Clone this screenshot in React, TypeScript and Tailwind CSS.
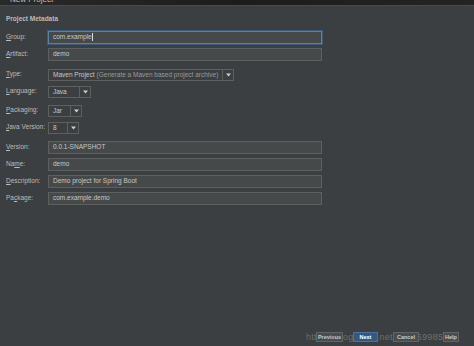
const font = { fontFamily: '"Liberation Sans", Arial, sans-serif' };

function Label({ text, u = 0 }: { text: string; u?: number }) {
  return (
    <span className="w-[42px] shrink-0 text-[6.5px] text-[#bbbbbb] leading-none">
      {text.slice(0, u)}
      <span className="underline">{text[u]}</span>
      {text.slice(u + 1)}
    </span>
  );
}

function TextRow({ label, u, value, focused, mt }: { label: string; u?: number; value: string; focused?: boolean; mt: string }) {
  return (
    <div className={`flex items-center pl-[6px] ${mt}`}>
      <Label text={label} u={u} />
      <div
        className={`h-[13px] w-[274px] flex items-center pl-[4px] text-[6.5px] text-[#c8c8c8] border ${
          focused ? 'border-[#5d7fa3] bg-[#45494a] shadow-[0_0_0_1px_#3c5a7a]' : 'border-[#5e6060] bg-[#45494a]'
        }`}
      >
        {value}
        {focused && <span className="w-px h-[8px] bg-[#dddddd]" />}
      </div>
    </div>
  );
}

function ComboRow({ label, u, value, width, mt }: { label: string; u?: number; value: React.ReactNode; width: string; mt: string }) {
  return (
    <div className={`flex items-center pl-[6px] ${mt}`}>
      <Label text={label} u={u} />
      <div className={`h-[12px] ${width} flex border border-[#5e6060] bg-[#3c3f41]`}>
        <div className="flex-1 flex items-center pl-[4px] text-[6.5px] text-[#c8c8c8] whitespace-nowrap overflow-hidden">{value}</div>
        <div className="w-[11px] border-l border-[#5e6060] flex items-center justify-center">
          <svg width="5" height="4" viewBox="0 0 5 4">
            <path d="M0 0.5 H5 L2.5 3.5 Z" fill="#cfcfcf" />
          </svg>
        </div>
      </div>
    </div>
  );
}

function Btn({ text, primary, w, ml }: { text: string; primary?: boolean; w: string; ml: string }) {
  return (
    <div
      className={`h-[10px] ${w} ${ml} flex items-center justify-center text-[5.5px] font-bold border ${
        primary ? 'bg-[#365880] border-[#4c70a0] text-white' : 'bg-[#4a4d4f] border-[#606364] text-[#c8c8c8]'
      }`}
    >
      {text}
    </div>
  );
}

export default function App() {
  return (
    <div className="relative w-[474px] h-[346px] bg-[#3c3f41] overflow-hidden" style={font}>
      {/* Title bar (mostly cut off) */}
      <div className="h-[6px] overflow-hidden bg-gradient-to-r from-[#2a2a2a] via-[#1c1c1c] to-[#262222] border-b border-[#4a4a4a]">
        <div className="-mt-[4px] pl-[10px] text-[8px] text-[#c0c0c0] leading-none">New Project</div>
      </div>

      <div className="pl-[6px] pt-[10px] text-[6.5px] font-bold text-[#bbbbbb] leading-none">Project Metadata</div>

      <TextRow label="Group:" value="com.example" focused mt="mt-[8px]" />
      <TextRow label="Artifact:" value="demo" mt="mt-[4px]" />
      <ComboRow
        label="Type:"
        value={
          <>
            Maven Project <span className="text-[#9a9a9a] ml-[2px]">(Generate a Maven based project archive)</span>
          </>
        }
        width="w-[186px]"
        mt="mt-[8px]"
      />
      <ComboRow label="Language:" value="Java" width="w-[43px]" mt="mt-[5px]" />
      <ComboRow label="Packaging:" value="Jar" width="w-[34px]" mt="mt-[7px]" />
      <ComboRow label="Java Version:" value="8" width="w-[31px]" mt="mt-[5px]" />
      <TextRow label="Version:" value="0.0.1-SNAPSHOT" mt="mt-[7px]" />
      <TextRow label="Name:" u={2} value="demo" mt="mt-[4px]" />
      <TextRow label="Description:" value="Demo project for Spring Boot" mt="mt-[4px]" />
      <TextRow label="Package:" u={2} value="com.example.demo" mt="mt-[4px]" />

      {/* watermark, lies under the buttons */}
      <div className="absolute left-[306px] top-[331px] text-[9px] text-white/25 tracking-[0.3px] pointer-events-none whitespace-nowrap">
        https://blog.csdn.net/qq_36998557
      </div>

      <div className="absolute left-0 right-0 top-[332px] flex pl-[316px]">
        <Btn text="Previous" w="w-[27px]" ml="ml-0" />
        <Btn text="Next" primary w="w-[25px]" ml="ml-[10px]" />
        <Btn text="Cancel" w="w-[26px]" ml="ml-[15px]" />
        <Btn text="Help" w="w-[16px]" ml="ml-[24px]" />
      </div>
    </div>
  );
}
